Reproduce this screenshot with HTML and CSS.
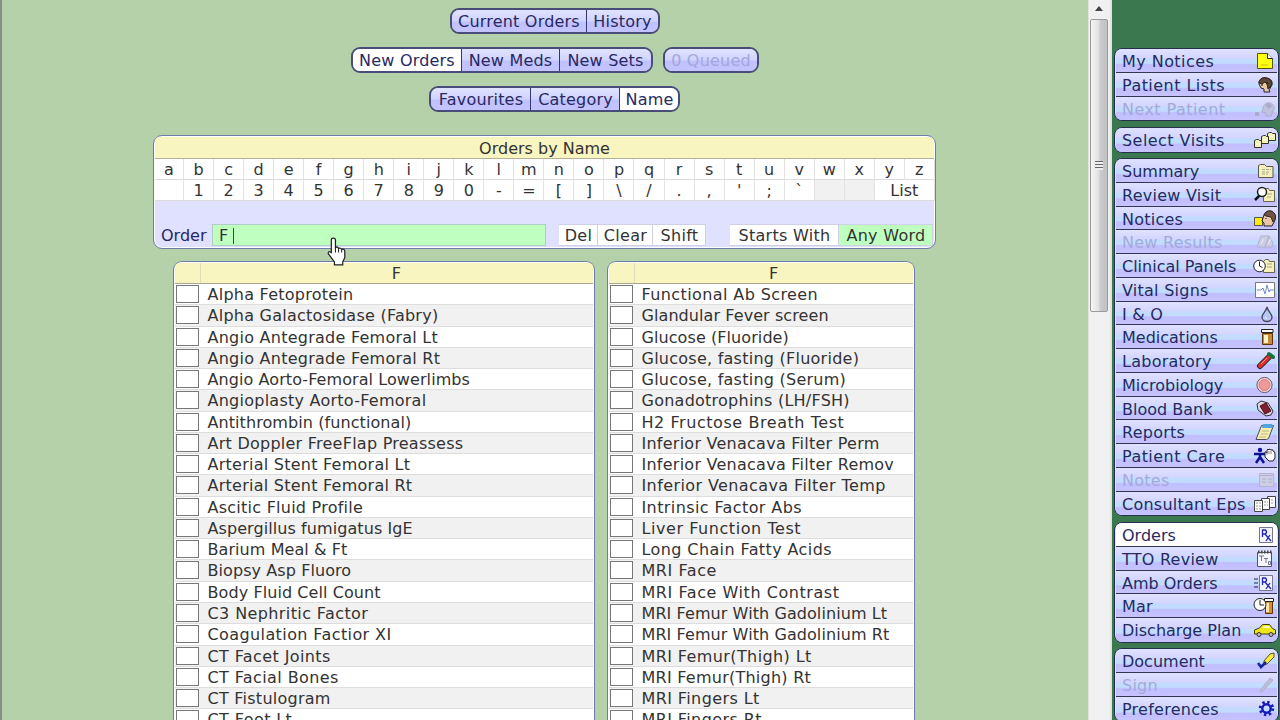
FILE: index.html
```html
<!DOCTYPE html>
<html lang="en">
<head>
    <meta charset="utf-8">
    <title>Orders by Name</title>
    <link rel="stylesheet" href="styles.css">
</head>
<body>

<div class="app">
    <div class="main">
        <!-- Order tabs -->
        <div class="tabs">
            <div class="tab-row">
                <div class="tab-group">
                    <a class="tab w137">Current Orders</a>
                    <a class="tab w72">History</a>
                </div>
            </div>
            <div class="tab-row">
                <div class="tab-group">
                    <a class="tab w110 active">New Orders</a>
                    <a class="tab w98">New Meds</a>
                    <a class="tab w94">New Sets</a>
                </div>
                <div class="tab-group">
                    <a class="tab w96 disabled">0 Queued</a>
                </div>
            </div>
            <div class="tab-row">
                <div class="tab-group">
                    <a class="tab w102">Favourites</a>
                    <a class="tab w89">Category</a>
                    <a class="tab w60 active">Name</a>
                </div>
            </div>
        </div>

        <!-- On screen keyboard -->
        <div class="keyboard">
            <div class="panel-title">Orders by Name</div>
            <div class="keys">
                <span>a</span><span>b</span><span>c</span><span>d</span><span>e</span><span>f</span><span>g</span><span>h</span><span>i</span><span>j</span><span>k</span><span>l</span><span>m</span><span>n</span><span>o</span><span>p</span><span>q</span><span>r</span><span>s</span><span>t</span><span>u</span><span>v</span><span>w</span><span>x</span><span>y</span><span>z</span>
                <span></span><span>1</span><span>2</span><span>3</span><span>4</span><span>5</span><span>6</span><span>7</span><span>8</span><span>9</span><span>0</span><span>-</span><span>=</span><span>[</span><span>]</span><span>\</span><span>/</span><span>.</span><span>,</span><span>'</span><span>;</span><span>`</span><span class="blank"></span><span class="blank"></span><span class="list-key">List</span>
            </div>
            <div class="entry">
                <label class="entry-label">Order</label>
                <div class="entry-box">F<span class="caret"></span></div>
                <div class="key-group edit-keys">
                    <a class="del">Del</a><a class="clear">Clear</a><a class="shift">Shift</a>
                </div>
                <div class="key-group match-keys">
                    <a class="starts">Starts With</a><a class="any">Any Word</a>
                </div>
            </div>
        </div>

        <!-- Search results -->
        <div class="results">
            <div class="list list-left">
                <div class="list-head"><i></i><b>F</b></div>
                <div class="item"><i></i><b>Alpha Fetoprotein</b></div>
                <div class="item"><i></i><b>Alpha Galactosidase (Fabry)</b></div>
                <div class="item"><i></i><b>Angio Antegrade Femoral Lt</b></div>
                <div class="item"><i></i><b>Angio Antegrade Femoral Rt</b></div>
                <div class="item"><i></i><b class="tight">Angio Aorto-Femoral Lowerlimbs</b></div>
                <div class="item"><i></i><b>Angioplasty Aorto-Femoral</b></div>
                <div class="item"><i></i><b class="tight">Antithrombin (functional)</b></div>
                <div class="item"><i></i><b>Art Doppler FreeFlap Preassess</b></div>
                <div class="item"><i></i><b>Arterial Stent Femoral Lt</b></div>
                <div class="item"><i></i><b>Arterial Stent Femoral Rt</b></div>
                <div class="item"><i></i><b>Ascitic Fluid Profile</b></div>
                <div class="item"><i></i><b class="tight">Aspergillus fumigatus IgE</b></div>
                <div class="item"><i></i><b class="tight">Barium Meal &amp; Ft</b></div>
                <div class="item"><i></i><b class="tight">Biopsy Asp Fluoro</b></div>
                <div class="item"><i></i><b class="tight">Body Fluid Cell Count</b></div>
                <div class="item"><i></i><b class="loose">C3 Nephritic Factor</b></div>
                <div class="item"><i></i><b class="loose">Coagulation Factior XI</b></div>
                <div class="item"><i></i><b class="loose">CT Facet Joints</b></div>
                <div class="item"><i></i><b class="loose">CT Facial Bones</b></div>
                <div class="item"><i></i><b>CT Fistulogram</b></div>
                <div class="item"><i></i><b class="loose">CT Foot Lt</b></div>
            </div>
            <div class="list list-right">
                <div class="list-head"><i></i><b>F</b></div>
                <div class="item"><i></i><b class="loose">Functional Ab Screen</b></div>
                <div class="item"><i></i><b class="tight">Glandular Fever screen</b></div>
                <div class="item"><i></i><b class="tight">Glucose (Fluoride)</b></div>
                <div class="item"><i></i><b>Glucose, fasting (Fluoride)</b></div>
                <div class="item"><i></i><b>Glucose, fasting (Serum)</b></div>
                <div class="item"><i></i><b>Gonadotrophins (LH/FSH)</b></div>
                <div class="item"><i></i><b class="loose wide">H2 Fructose Breath Test</b></div>
                <div class="item"><i></i><b>Inferior Venacava Filter Perm</b></div>
                <div class="item"><i></i><b>Inferior Venacava Filter Remov</b></div>
                <div class="item"><i></i><b class="loose">Inferior Venacava Filter Temp</b></div>
                <div class="item"><i></i><b class="loose">Intrinsic Factor Abs</b></div>
                <div class="item"><i></i><b class="wide">Liver Function Test</b></div>
                <div class="item"><i></i><b class="loose">Long Chain Fatty Acids</b></div>
                <div class="item"><i></i><b class="wide">MRI Face</b></div>
                <div class="item"><i></i><b class="wide">MRI Face With Contrast</b></div>
                <div class="item"><i></i><b class="tight">MRI Femur With Gadolinium Lt</b></div>
                <div class="item"><i></i><b class="tight">MRI Femur With Gadolinium Rt</b></div>
                <div class="item"><i></i><b class="loose">MRI Femur(Thigh) Lt</b></div>
                <div class="item"><i></i><b>MRI Femur(Thigh) Rt</b></div>
                <div class="item"><i></i><b class="loose">MRI Fingers Lt</b></div>
                <div class="item"><i></i><b class="loose">MRI Fingers Rt</b></div>
            </div>
        </div>
    </div>

    <div class="scrollbar">
        <div class="scroll-up"><svg width="8" height="5"><path d="M4 0L8 5H0z" fill="#444"/></svg></div>
        <div class="thumb"><span class="grip"></span></div>
    </div>

    <!-- Side menu -->
    <div class="sidebar">
        <div class="menu">
            <a class="loose">My Notices<svg viewBox="0 0 24 20"><path d="M4.500 2.500h10l5 5v10h-15z" fill="#ffff10" stroke="#55550a"/><path d="M14.500 2.500v5h5" fill="#fff" stroke="#222"/><path d="M8 14h7" stroke="#c8c000"/></svg></a>
            <a class="loose">Patient Lists<svg viewBox="0 0 24 20"><path d="M6 8c0-4 4-6 7-5 4 0 7 3 6 7l-3 5 1 2h-6v-3l-3-1-2-4z" fill="#e9c9a4" stroke="#222"/><path d="M6 8c0-4 4-6 7-5 4 0 7 4 5 8l-3 3-1-5-2-2-3 2z" fill="#5c4635" stroke="#30261e"/><path d="M8 10h2M13 8h2" stroke="#111"/></svg></a>
            <a class="disabled loose">Next Patient<svg viewBox="0 0 24 20"><path d="M10 9c1-4 4-6 7-5 4 1 5 5 3 8l-2 5h-5v-3l-4-1z" fill="#c2c2e0" stroke="#aaadc9"/><path d="M2 13h4v4H2zM12 6c2-3 6-2 7 1l-3 3z" fill="#a9adc9"/></svg></a>
        </div>
        <div class="menu">
            <a class="loose">Select Visits<svg viewBox="0 0 24 20"><g fill="#f4efb4" stroke="#333428"><path d="M14.500 3.500l2-1h2l1 1h3v7h-8z"/><path d="M8.500 6.500l2-1h2l1 1h2v7h-7z"/><path d="M1.500 10.500l2-1h2l1 1h2v7h-7z"/></g><path d="M3 14h4M10 10h4M17 6h4" stroke="#fff"/></svg></a>
        </div>
        <div class="menu">
            <a class="tight">Summary<svg viewBox="0 0 24 20"><path d="M5.500 16.500v-12l2-1h4l2 2h6.500v11z" fill="#f6f0bb" stroke="#55564c"/><path d="M9 8.500h9M9 11h8M9 13h6" stroke="#aaa987" stroke-dasharray="3 1"/></svg></a>
            <a>Review Visit<svg viewBox="0 0 24 20"><path d="M10.500 16.500v-11l2-2h3l1 2h5v11z" fill="#f6f0bb" stroke="#666754"/><path d="M14 9h5M14 12h4" stroke="#aaa987"/><path d="M7 10l-5 5" stroke="#111" stroke-width="2.500"/><circle cx="9" cy="7" r="4.500" fill="#fff" stroke="#222" stroke-width="1.500"/></svg></a>
            <a>Notices<svg viewBox="0 0 24 20"><path d="M1.500 8.500h8v8h-8z" fill="#ffec00" stroke="#555"/><path d="M11 6c1-4 6-5 9-3 3 3 3 7 1 10l-2 4h-8v-3l-2-2z" fill="#e8c5a5" stroke="#222"/><path d="M11 6c2-5 8-5 10-2 3 3 1 8-1 9l-2-5-5-1z" fill="#705342" stroke="#332920"/><path d="M13 9v1" stroke="#111"/></svg></a>
            <a class="disabled">New Results<svg viewBox="0 0 24 20"><path d="M4 15L8 4h8l-4 11zM12 15l4-11 4 7-1 4z" fill="#cccde4" stroke="#b0b2ce"/><path d="M8 12l3-5M15 12l3-5" stroke="#eee"/></svg></a>
            <a class="tight">Clinical Panels<svg viewBox="0 0 24 20"><path d="M10.500 16.500v-11l2-2h3l1 2h5v11z" fill="#f6f0bb" stroke="#666754"/><path d="M14 8h5M14 11h5" stroke="#aaa987"/><circle cx="6.500" cy="10" r="5.800" fill="#fff" stroke="#222"/><path d="M6.500 5.500V10l3 1.500" fill="none" stroke="#222"/></svg></a>
            <a>Vital Signs<svg viewBox="0 0 24 20"><path d="M2.500 2.500h19v15h-19z" fill="#fff" stroke="#777"/><path d="M4 10h4l2-2 2 6 2-9 2 7 1-2h4" fill="none" stroke="#7189d5"/></svg></a>
            <a>I &amp; O<svg viewBox="0 0 24 20"><path d="M14 3c-1 5-5 7-5 10 0 6 10 6 10 0 0-3-4-5-5-10z" fill="#b8c8f4" stroke="#45465c" stroke-width="1.300"/><path d="M12 13l2 2" stroke="#fff"/></svg></a>
            <a class="tight">Medications<svg viewBox="0 0 24 20"><path d="M9.500 6.500h10v11h-10z" fill="#c98a35" stroke="#5c3509"/><path d="M11 8h4v8h-4z" fill="#fff3c8"/><path d="M8.500 2.500h11.500v3h-11.500z" fill="#fff" stroke="#222"/></svg></a>
            <a>Laboratory<svg viewBox="0 0 24 20"><path d="M7 15L16 6" stroke="#222" stroke-width="6" stroke-linecap="round"/><path d="M7 15L16 6" stroke="#e02b31" stroke-width="4" stroke-linecap="round"/><path d="M16 3l4 3" stroke="#14763e" stroke-width="4" stroke-linecap="round"/><path d="M8 13l6-6" stroke="#ff958c"/></svg></a>
            <a class="tight">Microbiology<svg viewBox="0 0 24 20"><circle cx="11.500" cy="10" r="7.600" fill="#f7d4d5" stroke="#665a65"/><circle cx="11.500" cy="10" r="5.500" fill="#ef9999" stroke="#d77c82"/></svg></a>
            <a class="tight">Blood Bank<svg viewBox="0 0 24 20"><path d="M4 5l4-3 7 2 5 8-2 4-5 1-8-6z" fill="#ded8e4" stroke="#333"/><path d="M7 7l6-3 5 8-6 3z" fill="#831d31" stroke="#441018"/></svg></a>
            <a>Reports<svg viewBox="0 0 24 20"><path d="M8.500 3.500h12l-5 13-2 1H3z" fill="#f6edae" stroke="#454a60"/><path d="M10 2h9l1 2-1 2H9z" fill="#4fa5df"/><path d="M9 9h7M8 12h7M6 15h7" stroke="#b9b688"/></svg></a>
            <a class="loose">Patient Care<svg viewBox="0 0 24 20"><circle cx="7" cy="4" r="2.200" fill="#0c1392"/><path d="M1 8h12M7 7v6M7 11l-4 6M7 11l4 6" stroke="#0c1392" stroke-width="2.500"/><path d="M12 11V6q1-1 2 1V4q1-2 2 0 0-2 2 0 2-1 2 1 2 0 2 3v4l-2 3h-4z" fill="#fff" stroke="#222"/><path d="M14 6v3M16 5v3M18 5v3" stroke="#555" stroke-width=".7"/></svg></a>
            <a class="disabled">Notes<svg viewBox="0 0 24 20"><path d="M6.500 3.500h14v13h-14z" fill="#cecfe7" stroke="#b3b4d1"/><path d="M6 5.500h14M9 9h4M9 12h4M15 9h4M15 12h4" stroke="#aeb0d0"/></svg></a>
            <a>Consultant Eps<svg viewBox="0 0 24 20"><g fill="#fff" stroke="#444"><path d="M14.500 2.500h8v11h-8z"/><path d="M8.500 4.500h8v11h-8z"/><path d="M1.500 6.500h8v11h-8z"/></g><path d="M3 9h5M3 12h5M3 15h5M11 8h4M11 11h4M18 6h3M18 9h3" stroke="#999" stroke-dasharray="2 1"/></svg></a>
        </div>
        <div class="menu">
            <a class="active tight">Orders<svg viewBox="0 0 24 20"><path d="M6.500 2.500h13v15h-13z" fill="#f2f3ff" stroke="#777890"/><path d="M9.500 12V5h3q2 2 0 4h-3M12 9l6 7M17 10l-4 6" fill="none" stroke="#2225bb" stroke-width="1.300"/></svg></a>
            <a>TTO Review<svg viewBox="0 0 24 20"><path d="M4.500 3.500h14v14h-14z" fill="#f5f6ff" stroke="#555"/><path d="M5 3h14" stroke="#444" stroke-width="3" stroke-dasharray="1.500 1.500"/><path d="M6 7h5M8.500 7v5M11 9.500h4M13 10v4M15.500 12.500h2v3h-2z" fill="none" stroke="#777b90"/></svg></a>
            <a class="tight">Amb Orders<svg viewBox="0 0 24 20"><path d="M1 6h4M1 10h4M1 14h4" stroke="#223"/><path d="M6.500 2.500h13v15h-13z" fill="#f2f3ff" stroke="#777890"/><path d="M9.500 12V5h3q2 2 0 4h-3M12 9l6 7M17 10l-4 6" fill="none" stroke="#2225bb" stroke-width="1.300"/></svg></a>
            <a>Mar<svg viewBox="0 0 24 20"><path d="M12.500 5.500h7v12h-7z" fill="#d88d32" stroke="#5c3509"/><path d="M13 7h3v9h-3z" fill="#ffe8b3"/><path d="M11.500 2.500h9v3h-9z" fill="#fff" stroke="#222"/><circle cx="7" cy="8.500" r="6" fill="#fff" stroke="#222"/><path d="M7 4v5h4" fill="none" stroke="#222"/></svg></a>
            <a class="tight">Discharge Plan<svg viewBox="0 0 24 20"><path d="M1.500 14v-4l5-2 3-3.500h7l3 4 3 1.500v4z" fill="#eee51c" stroke="#444000"/><path d="M9 8l2-2h5l2 2z" fill="#fcfac5"/><g fill="#bbb" stroke="#333"><circle cx="6" cy="14.500" r="2"/><circle cx="18" cy="14.500" r="2"/></g></svg></a>
        </div>
        <div class="menu">
            <a class="tight">Document<svg viewBox="0 0 24 20"><path d="M11 10l6-7 4-1v4l-7 7-3 1z" fill="#ffec37" stroke="#555124"/><path d="M5 12l3 4 5-5" fill="none" stroke="#1423a5" stroke-width="2.500"/></svg></a>
            <a class="disabled">Sign<svg viewBox="0 0 24 20"><path d="M8 14l9-11 3 2-10 11-3 1z" fill="#bdbdd8" stroke="#b0b1ce"/></svg></a>
            <a>Preferences<svg viewBox="0 0 24 20"><circle cx="13.500" cy="9.500" r="4.200" fill="none" stroke="#171ab5" stroke-width="2.400"/><circle cx="13.500" cy="9.500" r="6.200" fill="none" stroke="#171ab5" stroke-width="3" stroke-dasharray="2.300 2.570"/></svg></a>
        </div>
    </div>
</div>

<!-- Hand pointer -->
<svg class="pointer" viewBox="0 0 20 28"><path d="M5 15V3q0-2 2-2t2 2v7q2-1 3 1 2-1 3 1 3-1 3 2v6l-2 4v3H8v-3l-6-8q0-3 3-1z" fill="#fff" stroke="#222" stroke-width="1.200"/><path d="M9 10v5M12 11v4M15 12v3" stroke="#222"/></svg>

</body>
</html>
```

FILE: styles.css
```css
body {
    margin: 0;
    font-family: "DejaVu Sans", Verdana, sans-serif;
    font-size: 16px;
    color: #333;
    overflow: hidden;
}

.app {
    display: flex;
    width: 1280px;
    height: 720px;
    overflow: hidden;
    background-color: #3b774f;
}

.main {
    box-sizing: border-box;
    width: 1088px;
    border-left: 2px solid #868e86;
    background-color: #b5d1a9;
    overflow: hidden;
}

/* Tabs */
.tabs {
    display: flex;
    flex-direction: column;
    gap: 13px;
    padding-top: 8px;
    padding-left: 19px;
    letter-spacing: 0.2px;
}

.tab-row {
    display: flex;
    justify-content: center;
    gap: 10px;
    height: 26px;
}

.tab-group {
    display: flex;
    box-sizing: border-box;
    border: 2px solid #474c78;
    border-radius: 9px;
    overflow: hidden;
}

.tab {
    box-sizing: border-box;
    padding-left: 1px;
    border-right: 1px solid #34376b;
    line-height: 23px;
    text-align: center;
    white-space: nowrap;
    color: #29295f;
    background: linear-gradient(#e0e3ff, #d0d3ff 50%, #c0c2ff 56%, #c3c3ff);
}

.tab:last-child {
    border-right: none;
}

.w137 { width: 135px; }
.w72 { width: 71px; }
.w110 { width: 109px; }
.w98 { width: 98px; }
.w94 { width: 91px; }
.w96 { width: 92px; }
.w102 { width: 100px; }
.w89 { width: 89px; }
.w60 { width: 58px; }

.tab.active {
    background: #fff;
}

.tab.disabled {
    color: #a3a7da;
}

/* Keyboard panel */
.keyboard {
    box-sizing: border-box;
    width: 783px;
    height: 114px;
    margin: 23px 0 0 151px;
    border: 1px solid #6c7da8;
    border-radius: 9px;
    overflow: hidden;
    background-color: #dfe1ff;
    box-shadow: inset 0 0 0 1px #fff;
}

.panel-title {
    height: 21px;
    margin: 1px 1px 0;
    border-bottom: 1px solid #b3af98;
    background-color: #f9f5c0;
    text-align: center;
    line-height: 23px;
}

.keys {
    display: grid;
    grid-template-columns: 29px repeat(25, 30.040px);
    grid-auto-rows: 21px;
    margin: 0 1px;
    line-height: 22px;
    text-align: center;
    color: #333;
}

.keys span {
    border-right: 1px solid #e2e2e2;
    border-bottom: 1px solid #dcdcdc;
    background-color: #fff;
}

.keys .blank {
    background-color: #f1f1f1;
}

.keys .list-key {
    grid-column: span 2;
}

.entry {
    display: flex;
    height: 22px;
    padding: 23px 0 0 7px;
    line-height: 23px;
}

.entry-label {
    width: 51px;
    color: #27275f;
}

.entry-box {
    display: flex;
    box-sizing: border-box;
    width: 334px;
    padding-left: 6px;
    border: 1px solid #aecdc8;
    background-color: #bfffbf;
    line-height: 22px;
}

.caret {
    width: 1px;
    height: 16px;
    margin: 3px 0 0 5px;
    background-color: #444;
}

.key-group {
    display: flex;
    text-align: center;
    letter-spacing: 0.3px;
}

.key-group a {
    box-sizing: border-box;
    padding-left: 1px;
    border: 1px solid #d0d0e4;
    border-left-width: 0;
    background-color: #fff;
    line-height: 22px;
    white-space: nowrap;
}

.edit-keys {
    margin-left: 13px;
}

.match-keys {
    margin-left: 24px;
}

.key-group .del { width: 39px; }
.key-group .clear { width: 55px; }
.key-group .shift { width: 53px; }
.key-group .starts { width: 109px; }
.key-group .any {
    width: 94px;
    background-color: #bfffbf;
}

/* Results */
.results {
    display: flex;
    gap: 12px;
    margin: 12px 0 0 170.500px;
}

.list {
    box-sizing: border-box;
    border: 1px solid #6c7da8;
    border-bottom: none;
    border-radius: 9px 9px 0 0;
    padding: 1px 1px 0;
    overflow: hidden;
    background-color: #fff;
}

.list-left {
    width: 422px;
}

.list-right {
    width: 308.500px;
}

.list b {
    font-weight: normal;
    letter-spacing: 0.250px;
}

.list .tight {
    letter-spacing: 0.080px;
}

.list .loose {
    letter-spacing: 0.400px;
}

.list .wide {
    letter-spacing: 0.560px;
}

.list-head {
    display: flex;
    height: 20px;
    border-bottom: 1px solid #aaa68e;
    background-color: #f9f5c0;
    line-height: 21px;
}

.list-head i {
    width: 25px;
    border-right: 1px solid #dfdcb8;
}

.list-head b {
    flex: 1;
    text-align: center;
}

.item {
    display: flex;
    box-sizing: border-box;
    height: 21.270px;
    border-bottom: 1px solid #ddd;
    line-height: 21px;
    white-space: nowrap;
}

.item:nth-child(odd) {
    background-color: #f1f1f1;
}

.item i {
    box-sizing: border-box;
    width: 23px;
    height: 18px;
    margin: 1px 9px 0 1px;
    border: 1px solid #777;
    background-color: #fff;
}

/* Scrollbar */
.scrollbar {
    box-sizing: border-box;
    width: 24px;
    padding-left: 1px;
    border-left: 1px solid #dfe5dc;
    border-right: 2px solid #e0e5e0;
    background-color: #f1f1f1;
}

.scroll-up {
    height: 19px;
    text-align: center;
    padding-right: 3px;
    line-height: 11px;
}

.thumb {
    display: flex;
    align-items: center;
    justify-content: center;
    box-sizing: border-box;
    width: 18px;
    height: 293px;
    border: 1px solid #999;
    border-radius: 2px;
    background: linear-gradient(to right, #f5f5f5, #e3e3e3 45%, #cacace 60%, #c2c2c5);
}

.grip {
    width: 8px;
    height: 9px;
    background: repeating-linear-gradient(#666 0, #666 1px, #eee 1px, #eee 3px);
}

/* Side menu */
.sidebar {
    display: flex;
    flex-direction: column;
    flex: 1;
    gap: 5.600px;
    padding: 48px 1px 0 2px;
    color: #29295f;
    letter-spacing: 0.250px;
}

.menu {
    flex: none;
    border: 1px solid #25304e;
    border-radius: 8px;
    padding: 0 1px;
    overflow: hidden;
    background-color: #dcdfff;
}

.menu a {
    display: flex;
    justify-content: space-between;
    box-sizing: border-box;
    height: 23.750px;
    padding-left: 6px;
    border-bottom: 1px solid #333653;
    line-height: 25px;
    white-space: nowrap;
    background: linear-gradient(#dfe2ff, #d3d5ff 40%, #c2dcff 45%, #c2dcff 62%, #c1beff 68%, #c6c3ff);
}

.menu a:last-child {
    border-bottom: none;
}

.menu a.active {
    background: #fff;
}

.menu a.disabled {
    color: #a5a9da;
}

.menu a.tight {
    letter-spacing: 0;
}

.menu a.loose {
    letter-spacing: 0.450px;
}

.menu svg {
    flex: none;
    width: 24px;
    height: 20px;
    margin-top: 2px;
}

.pointer {
    position: absolute;
    left: 326px;
    top: 237px;
    width: 21px;
    height: 29px;
}
```
